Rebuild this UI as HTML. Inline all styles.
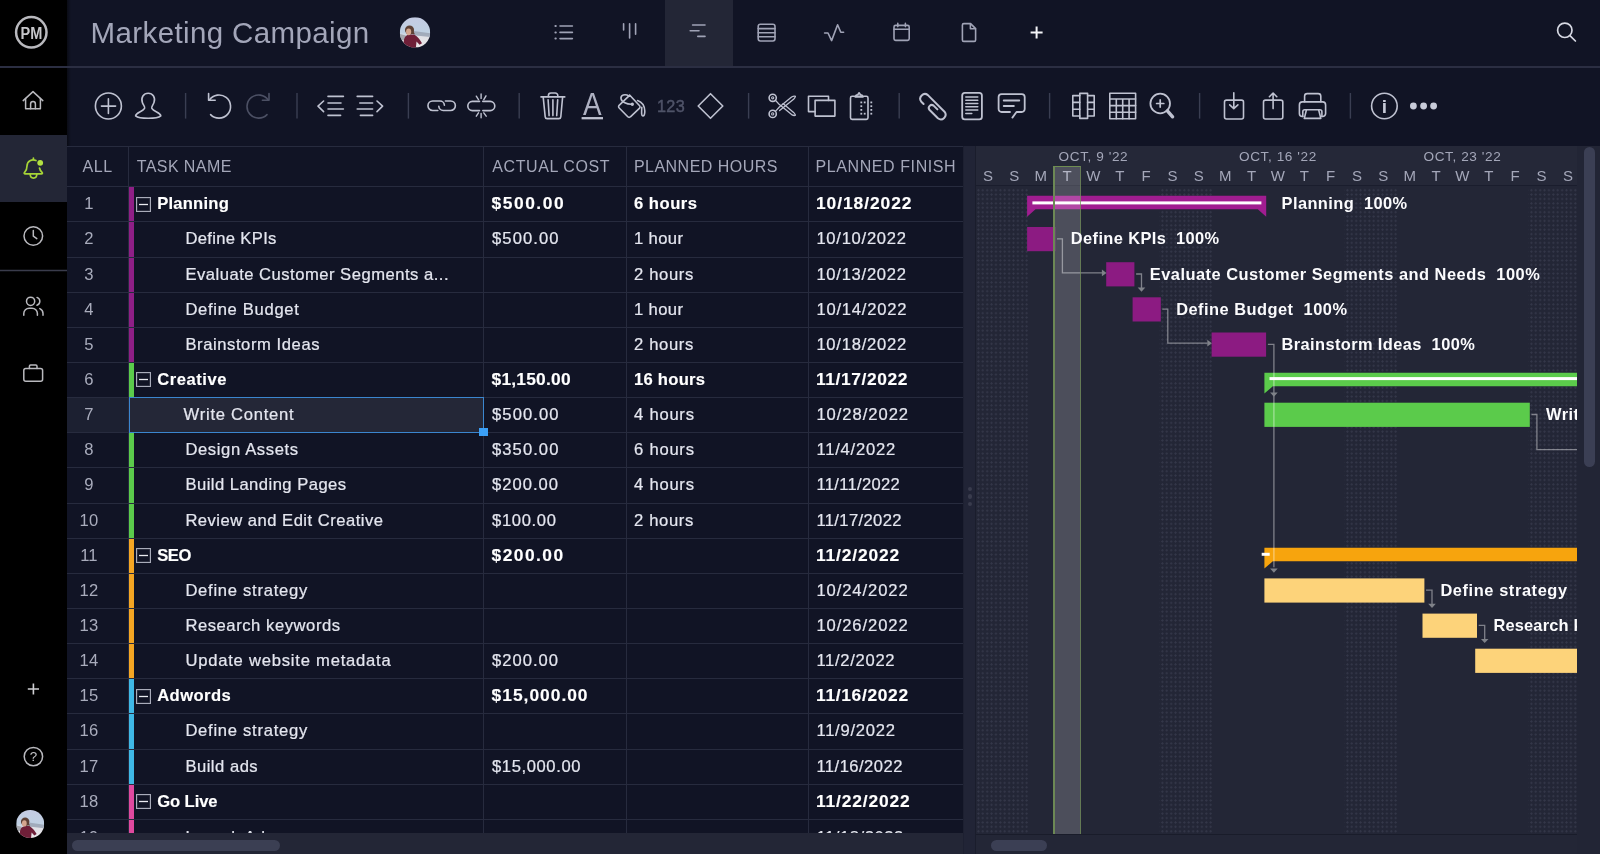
<!DOCTYPE html>
<html lang="en"><head><meta charset="utf-8"><title>Marketing Campaign</title>
<style>
*{box-sizing:border-box;margin:0;padding:0}
html,body{width:1600px;height:854px;overflow:hidden;background:#111425}
body{font-family:"Liberation Sans",Arial,sans-serif;color:#e6e8f0;-webkit-font-smoothing:antialiased}
#app{position:relative;width:1600px;height:854px;overflow:hidden;background:#111425;will-change:transform}
.abs{position:absolute}
svg{position:absolute;left:0;top:0;overflow:visible}
#sidebar{position:absolute;left:0;top:0;width:67px;height:854px;background:#000}
#sideshadow{position:absolute;left:67px;top:0;width:4px;height:854px;background:linear-gradient(90deg,rgba(0,0,0,.45),rgba(0,0,0,0))}
#sideactive{position:absolute;left:0;top:134.6px;width:67px;height:67.2px;background:#232636}
#hline{position:absolute;left:0;top:66px;width:1600px;height:2px;background:#2b2e42}
#title{position:absolute;left:90.6px;top:14px;font-size:29.5px;line-height:37.4px;color:#a3a6b9;letter-spacing:.38px;white-space:nowrap}
#tabactive{position:absolute;left:665.2px;top:0;width:67.4px;height:66px;background:#232636}
.ic{fill:none;stroke:#bfc2d1;stroke-width:1.6;stroke-linecap:round;stroke-linejoin:round}
.nav{fill:none;stroke:#a0a3b6;stroke-width:1.6;stroke-linecap:round;stroke-linejoin:round}
.side{fill:none;stroke:#b9b9be;stroke-width:1.5;stroke-linecap:round;stroke-linejoin:round}
.sep{stroke:#3a3e52;stroke-width:1.4;fill:none}
.dim{stroke:#4c5064}
/* grid */
#grid{position:absolute;left:67px;top:146px;width:895.5px;height:687.6px;overflow:hidden;background:#111425}
.hl{position:absolute;left:0;width:895.5px;height:1px;background:#272b3e}
.vl{position:absolute;top:0;width:1px;height:690px;background:#272b3e}
.th{position:absolute;top:0.7px;height:40px;line-height:40px;font-size:16px;color:#a4a7b9;white-space:nowrap}
.c{position:absolute;height:35px;line-height:34px;font-size:16.6px;color:#e4e6ef;white-space:nowrap}
.num{width:44px;text-align:center;left:0;color:#a9acbc;font-size:16.6px;letter-spacing:.2px}
.c{-webkit-text-stroke:.22px #e4e6ef}
.num{-webkit-text-stroke:0}
.b{font-weight:700;color:#fff;-webkit-text-stroke:.15px #fff}
.bar{position:absolute;left:61.2px;width:6.2px;height:35.6px}
.box{position:absolute;left:69px;width:15px;height:15px;border:1px solid #a9acba;box-shadow:inset 0 0 0 .5px rgba(169,172,186,.35)}
.box:after{content:"";position:absolute;left:2px;right:2px;top:6px;height:1px;background:#e9eaf0;box-shadow:0 .5px 0 rgba(233,234,240,.3),0 -.5px 0 rgba(233,234,240,.3)}
#sel{position:absolute;left:61.8px;width:355.4px;height:36.2px;background:#242737;border:1.5px solid #3b86cf}
#selnum{position:absolute;left:0;width:61.5px;height:35.2px;background:#1c2031}
#selh{position:absolute;left:412.2px;width:8.8px;height:8.4px;background:#3b9ff5}
#gscroll{position:absolute;left:67px;top:833px;width:895.5px;height:21px;background:#232636}
#gthumb{position:absolute;left:4.6px;top:6.6px;width:208px;height:11px;border-radius:6px;background:#3b3f53}
#split{position:absolute;left:962.5px;top:146px;width:13px;height:708px;background:#212436;border-right:1.2px solid #1a1d2c;border-left:1px solid #1d2031}
.sd{position:absolute;left:4px;width:4.6px;height:4.6px;border-radius:2.3px;background:#393c4d}
/* gantt */
#gantt{position:absolute;left:975.5px;top:146px;width:601px;height:687.6px;overflow:hidden;background:#232636}
#ghead{position:absolute;left:0;top:0;width:601px;height:40.4px;background:#252838;border-bottom:1.3px solid #1a1d2d}
.wk{position:absolute;top:3.4px;font-size:13.6px;line-height:16px;color:#a4a7b9;white-space:nowrap;letter-spacing:.58px;text-align:center;width:184.5px}
.dl{position:absolute;top:20.5px;width:26.36px;text-align:center;font-size:15px;line-height:18px;color:#a4a7b9}
.we{position:absolute;top:41.5px;height:646px;background-image:radial-gradient(circle,#343749 0.8px,rgba(52,55,73,0) 1.3px);background-size:4.393px 4.4px;background-position:1.2px 0}
#today{position:absolute;left:77.4px;top:20px;width:28px;height:670px;background:rgba(255,255,255,.19);border:1.3px solid #6f8d52;border-left:2.2px solid #6c8855;border-right:1.2px solid rgba(111,141,82,.7);border-bottom:0}
.t{position:absolute;height:23.8px}
.lb{position:absolute;font-size:16.4px;font-weight:700;color:#fbfbfd;white-space:pre;line-height:20px}
#vtrack{position:absolute;left:1576.5px;top:146px;width:23.5px;height:708px;background:#222535}
#vthumb{position:absolute;left:7.6px;top:0.6px;width:10.5px;height:320px;border-radius:5.5px;background:#3b3f54}
#hscroll{position:absolute;left:975.5px;top:833.6px;width:601px;height:21px;background:#232636;border-top:1.3px solid #191c2a}
#hthumb{position:absolute;left:15px;top:5.6px;width:56px;height:11px;border-radius:6px;background:#3b3f54}
</style></head>
<body>
<div id="app">

<div id="sidebar"></div><div id="sideshadow"></div><div id="sideactive"></div>
<div id="hline"></div>
<svg width="1600" height="854" viewBox="0 0 1600 854">
<!-- logo -->
<circle cx="31.3" cy="32.3" r="15.2" fill="none" stroke="#b9b9be" stroke-width="2.5"/>
<text x="20.6" y="38.7" textLength="21.8" lengthAdjust="spacingAndGlyphs" font-family="Liberation Sans, Arial, sans-serif" font-weight="700" font-size="17.2" fill="#c6c6ca">PM</text>
<!-- home -->
<g class="side">
<path d="M23.2 100.6 L33 91.6 L42.8 100.6"/>
<path d="M25.6 98.6 V108.8 H40.4 V98.6"/>
<path d="M30.6 108.8 V104 a2.4 2.4 0 0 1 4.8 0 V108.8"/>
</g>
<!-- bell -->
<g fill="none" stroke="#a6d437" stroke-width="1.7" stroke-linecap="round" stroke-linejoin="round">
<path d="M36 160.5 C32 158.6 27 161 27 166 C27 169.6 26 171 24.600 172.400 C23.800 173.200 24.200 173.900 25.200 173.900 H41.400 C42.400 173.900 42.800 173.200 42 172.400 C40.800 171.200 39.800 170 39.500 168"/>
<path d="M30.200 174 C30.200 179.400 36.800 179.400 36.800 174"/>
<path d="M33.400 158 V159.400"/>
</g>
<circle cx="40.2" cy="162.8" r="2.9" fill="#b2e042"/>
<!-- clock -->
<g class="side"><circle cx="33.3" cy="236" r="9.3"/><path d="M33.3 230.4 V236.2 L36.8 238.6"/></g>
<line x1="0" y1="270.5" x2="67" y2="270.5" stroke="#3a3c4c" stroke-width="1.4"/>
<!-- users -->
<g class="side">
<circle cx="30.6" cy="301.3" r="4.1"/>
<path d="M23.8 315.2 V313.6 A5.4 5.4 0 0 1 29.2 308.2 H32 A5.4 5.4 0 0 1 37.4 313.6 V315.2"/>
<path d="M37 297.4 A4.1 4.1 0 0 1 37 305.2"/>
<path d="M39.8 308.6 A5.4 5.4 0 0 1 43 313.6 V315.2"/>
</g>
<!-- briefcase -->
<g class="side">
<rect x="23.8" y="368.6" width="18.8" height="12.6" rx="2"/>
<path d="M29.4 368.6 V366.2 a1.2 1.2 0 0 1 1.2 -1.2 H35.8 a1.2 1.2 0 0 1 1.2 1.2 V368.6"/>
</g>
<!-- plus -->
<path d="M27.8 689 H39 M33.4 683.4 V694.6" stroke="#cfcfd3" stroke-width="1.6" fill="none"/>
<!-- help -->
<circle cx="33.4" cy="756.6" r="9.2" fill="none" stroke="#b9b9be" stroke-width="1.5"/>
<text x="33.4" y="761.4" text-anchor="middle" font-family="Liberation Sans, Arial, sans-serif" font-size="13.4" fill="#c4c4c9">?</text>
<g>
<clipPath id="av1"><circle cx="30.2" cy="824" r="14"/></clipPath>
<linearGradient id="av1g" x1="0" y1="0" x2="0" y2="1"><stop offset="0" stop-color="#c4cbe3"/><stop offset=".5" stop-color="#bfd0e2"/><stop offset=".62" stop-color="#dfe0e6"/><stop offset="1" stop-color="#ece6e8"/></linearGradient>
<g clip-path="url(#av1)">
<rect x="16.20" y="810.00" width="28" height="28" fill="url(#av1g)"/>
<path d="M28.80 822.60 L44.20 824.70 V828.20 L28.80 826.52 Z" fill="#9aa3b4" opacity=".85"/>
<path d="M16.20 825.40 L21.80 826.80 V831.00 H16.20 Z" fill="#8b8f96" opacity=".7"/>
<path d="M20.12 838.00 C19.00 831.00 20.40 827.08 24.60 825.96 L29.50 825.96 C33.00 828.20 35.52 831.70 36.64 834.08 L34.40 835.48 L31.60 832.40 L30.90 839.40 Z" fill="#6f1f38"/>
<ellipse cx="25.16" cy="821.76" rx="4.20" ry="4.20" fill="#5e4136"/>
<path d="M27.40 819.80 L29.92 825.40 L26.00 825.40 Z" fill="#5e4136"/>
<ellipse cx="24.32" cy="823.44" rx="2.38" ry="3.08" fill="#d4a68f"/>
</g></g>
</svg>


<div id="tabactive"></div>
<div id="title">Marketing Campaign</div>
<svg width="1600" height="70" viewBox="0 0 1600 70">
<g>
<clipPath id="av2"><circle cx="415" cy="32.4" r="15.2"/></clipPath>
<linearGradient id="av2g" x1="0" y1="0" x2="0" y2="1"><stop offset="0" stop-color="#c4cbe3"/><stop offset=".5" stop-color="#bfd0e2"/><stop offset=".62" stop-color="#dfe0e6"/><stop offset="1" stop-color="#ece6e8"/></linearGradient>
<g clip-path="url(#av2)">
<rect x="399.80" y="17.20" width="30.4" height="30.4" fill="url(#av2g)"/>
<path d="M413.48 30.88 L430.20 33.16 V36.96 L413.48 35.14 Z" fill="#9aa3b4" opacity=".85"/>
<path d="M399.80 33.92 L405.88 35.44 V40.00 H399.80 Z" fill="#8b8f96" opacity=".7"/>
<path d="M404.06 47.60 C402.84 40.00 404.36 35.74 408.92 34.53 L414.24 34.53 C418.04 36.96 420.78 40.76 421.99 43.34 L419.56 44.86 L416.52 41.52 L415.76 49.12 Z" fill="#6f1f38"/>
<ellipse cx="409.53" cy="29.97" rx="4.56" ry="4.56" fill="#5e4136"/>
<path d="M411.96 27.84 L414.70 33.92 L410.44 33.92 Z" fill="#5e4136"/>
<ellipse cx="408.62" cy="31.79" rx="2.58" ry="3.34" fill="#d4a68f"/>
</g></g>
<g class="nav">
<!-- list -->
<path d="M560 26 H572.4 M560 32.4 H572.4 M560 38.6 H572.4"/>
<path d="M555.4 26 h.4 M555.4 32.4 h.4 M555.4 38.6 h.4" stroke-width="2"/>
<!-- board -->
<path d="M623.6 23.8 V30 M629.6 23.8 V38 M635.6 23.8 V34.2"/>
<!-- gantt -->
<path d="M692.6 25 H705 M690.2 30.7 H699 M697.8 36.4 H705"/>
<!-- sheet -->
<rect x="758.2" y="24.2" width="16.8" height="16.8" rx="2.2"/>
<path d="M758.2 28.6 H775 M758.2 32.7 H775 M758.2 36.8 H775"/>
<!-- activity -->
<path d="M824.6 33 H828 L831.6 40.6 L837.6 24.8 L840.8 32.2 H843.6"/>
<!-- calendar -->
<rect x="894" y="25.4" width="15.2" height="15" rx="1.6"/>
<path d="M894 29.3 H909.2 M897.8 23.4 V26.6 M905.4 23.4 V26.6"/>
<!-- file -->
<path d="M963.8 23.6 H970.6 L975.6 28.6 V40 a1.4 1.4 0 0 1 -1.4 1.4 H963.8 a1.4 1.4 0 0 1 -1.4 -1.4 V25 a1.4 1.4 0 0 1 1.4 -1.4 Z"/>
<path d="M970.4 23.8 V28.8 H975.4"/>
</g>
<path d="M1030.6 32.4 H1042.6 M1036.6 26.4 V38.4" stroke="#f4f4f8" stroke-width="2" fill="none"/>
<g fill="none" stroke="#d7d9e4" stroke-width="1.7" stroke-linecap="round"><circle cx="1564.8" cy="30.3" r="7.2"/><path d="M1570.2 35.8 L1575.4 41"/></g>
</svg>


<svg width="1600" height="146" viewBox="0 0 1600 146">
<line class="sep" x1="185.6" y1="93" x2="185.6" y2="118.6"/><line class="sep" x1="297" y1="93" x2="297" y2="118.6"/><line class="sep" x1="408.4" y1="93" x2="408.4" y2="118.6"/><line class="sep" x1="519.2" y1="93" x2="519.2" y2="118.6"/><line class="sep" x1="748.6" y1="93" x2="748.6" y2="118.6"/><line class="sep" x1="899.2" y1="93" x2="899.2" y2="118.6"/><line class="sep" x1="1049.6" y1="93" x2="1049.6" y2="118.6"/><line class="sep" x1="1199.6" y1="93" x2="1199.6" y2="118.6"/><line class="sep" x1="1350.4" y1="93" x2="1350.4" y2="118.6"/>
<g class="ic">
<!-- add -->
<circle cx="108.4" cy="106" r="13"/><path d="M101.400 106.100 H115.600 M108.400 98.800 V113.400"/>
<!-- user -->
<path d="M135.600 115.800 C136 112.500 142.500 112 144.600 108.400 C145.400 107 143.500 105.500 142.400 102.600 C140.600 97.600 143.600 93.200 148.200 93.200 C152.800 93.200 155.800 97.600 154 102.600 C152.900 105.500 151 107 151.800 108.400 C153.900 112 160.400 112.500 160.800 115.800 C157 119 139.400 119 135.600 115.800 Z"/>
<!-- undo -->
<path d="M208.6 93.6 V100.2 H215.2"/><path d="M209.4 100 A11.6 11.6 0 1 1 210.6 114.6"/>
<!-- redo -->
<g class="dim"><path d="M269 93.6 V100.2 H262.4"/><path d="M268.2 100 A11.6 11.6 0 1 0 267 114.6"/></g>
<!-- outdent -->
<path d="M323.6 101 L318 106.2 L323.6 111.6"/>
<path d="M328 96.4 H343.4 M328 103 H341 M328 109 H343.4 M328 115.4 H340.6"/>
<!-- indent -->
<path d="M377 101 L382.6 106.2 L377 111.6"/>
<path d="M357.2 96.4 H372.6 M359.8 103 H372.6 M357.2 109 H372.6 M360.4 115.4 H372.6"/>
<!-- link -->
<path d="M437.8 110.5 H432.7 a4.75 4.75 0 0 1 0 -9.5 H440 a4.4 4.4 0 0 1 4.4 4.2"/>
<path d="M445.4 101 H450.6 a4.75 4.75 0 0 1 0 9.5 H443.2 a4.4 4.4 0 0 1 -4.4 -4.2"/>
<!-- unlink -->
<path d="M479.5 101.4 H472.4 a4.6 4.6 0 0 0 0 9.2 H479.5"/>
<path d="M482.8 101.4 H490.2 a4.6 4.6 0 0 1 0 9.2 H482.8"/>
<path d="M481.1 94 V98.4 M476.3 96.2 L478.5 99.6 M486 95.8 L483.8 99.6 M481.1 113.4 V117.8 M478.5 112.8 L476.3 116.2 M483.8 112.8 L486.2 116.2" stroke-width="1.4"/>
<!-- trash -->
<path d="M541 96.9 H564.8"/>
<path d="M548.4 96.8 V95.6 a2.6 2.6 0 0 1 2.6 -2.6 H555.2 a2.6 2.6 0 0 1 2.6 2.6 V96.8"/>
<path d="M543.2 97.2 L545.2 116.8 a2 2 0 0 0 2 1.8 H558.8 a2 2 0 0 0 2 -1.8 L562.6 97.2"/>
<path d="M548.1 99.8 L549.1 115.6 M552.9 99.8 V115.6 M557.7 99.8 L556.7 115.6"/>
<!-- font A -->
<path d="M581.6 118.2 H603" stroke-width="2.3" stroke-linecap="butt"/>
<!-- bucket -->
<path d="M629.8 95.2 L639.6 105.8 a1.8 1.8 0 0 1 0 2.4 L630.4 116.8 a1.8 1.8 0 0 1 -2.6 0 L619.2 108 a1.8 1.8 0 0 1 -.1 -2.6 L629.8 95.2"/>
<path d="M629 96 C625 93.4 620.4 95 621 98.6 C621.6 102 627 104.5 632 104.2"/>
<circle cx="632.3" cy="104.2" r=".9"/>
<path d="M637.6 100.6 C641.6 102 644.6 106 644.8 111 C644.9 114.6 644 116 642.8 116 C641.2 116 641.6 112 641.8 107.4"/>
<!-- diamond -->
<path d="M710.5 93.7 L722.8 106 L710.5 118.3 L698.2 106 Z"/>
<!-- scissors -->
<circle cx="772.7" cy="97.8" r="3.6"/><circle cx="772.7" cy="113.9" r="3.6"/>
<circle cx="772.7" cy="97.8" r="1.1" stroke-width="1.1"/><circle cx="772.7" cy="113.9" r="1.1" stroke-width="1.1"/>
<path d="M775.4 100.2 L779.4 104.6 L791.6 114.6 C793.4 115.6 794.8 115.6 795.4 115.2 C795.2 114.2 794.6 113.4 793.6 112.4 L783 103.6" stroke-width="1.3"/>
<path d="M775.4 111.4 L779.4 107 L791.6 97 C793.4 96 794.8 96 795.4 96.400 C795.2 97.400 794.600 98.200 793.600 99.200 L779.6 110.6" stroke-width="1.3"/>
<!-- copy -->
<path d="M815.1 111.6 H808.5 V96.3 H828.5 V100.4"/>
<rect x="815.1" y="100.4" width="19.8" height="15.700"/>
<!-- paste -->
<rect x="850.5" y="96.300" width="17.500" height="23.100" rx="1.600"/>
<path d="M855.2 97 L856.400 95 H857.600 L859.100 92.800 L860.600 95 H861.800 L863 97 Z"/>
<rect x="860.4" y="101.5" width="1.8" height="1.8" fill="#bfc2d1" stroke="none"/><rect x="860.4" y="105.3" width="1.8" height="1.8" fill="#bfc2d1" stroke="none"/><rect x="860.4" y="109.0" width="1.8" height="1.8" fill="#bfc2d1" stroke="none"/><rect x="860.4" y="112.8" width="1.8" height="1.8" fill="#bfc2d1" stroke="none"/><rect x="863.8" y="101.5" width="1.8" height="1.8" fill="#bfc2d1" stroke="none"/><rect x="863.8" y="112.8" width="1.8" height="1.8" fill="#bfc2d1" stroke="none"/><rect x="870.4" y="101.5" width="1.8" height="1.8" fill="#bfc2d1" stroke="none"/><rect x="870.4" y="105.3" width="1.8" height="1.8" fill="#bfc2d1" stroke="none"/><rect x="870.4" y="109.0" width="1.8" height="1.8" fill="#bfc2d1" stroke="none"/><rect x="870.4" y="112.8" width="1.8" height="1.8" fill="#bfc2d1" stroke="none"/>
<!-- paperclip -->
<path d="M923.600 104 L921.300 101.700 A4.700 4.700 0 0 1 927.900 95.100 L944.500 111.700 A4.700 4.700 0 0 1 937.900 118.300 L929.400 109.800 A3 3 0 0 1 933.600 105.600 L937.400 109.400" stroke-width="2"/>
<!-- doc -->
<rect x="962.200" y="92.800" width="19.700" height="26.500" rx="2.600" stroke-width="1.800"/>
<path d="M965.800 96.900 H977.800 M965.800 100.200 H977.800 M965.800 103.500 H977.800 M965.800 106.800 H977.800 M965.800 110.100 H977.800 M965.800 113.400 H971.800" stroke-width="1.500"/>
<!-- comment -->
<path d="M1010 112 H1001.600 a3 3 0 0 1 -3 -3 V97.100 a3 3 0 0 1 3 -3 H1021.700 a3 3 0 0 1 3 3 V109 a3 3 0 0 1 -3 3 H1016.500 L1012.400 117.600" stroke-width="1.800"/>
<path d="M1003.800 100.400 H1019.200 M1003.800 106 H1013.800" stroke-width="2"/>
<!-- columns -->
<rect x="1079.800" y="93.400" width="7.800" height="25"/>
<path d="M1079.800 95.600 H1072.800 V116 H1079.800 M1072.800 102.400 H1079.800 M1072.800 109.200 H1079.800"/>
<path d="M1087.600 95.600 H1094.200 V116 H1087.600 M1087.600 102.400 H1094.200 M1087.600 109.200 H1094.200"/>
<!-- grid -->
<rect x="1109.800" y="93.200" width="25.800" height="25.600"/>
<path d="M1109.800 99 H1135.600 M1109.800 105.600 H1135.600 M1109.800 112.200 H1135.600 M1116.300 99 V118.800 M1122.700 99 V118.800 M1129.100 99 V118.800"/>
<!-- zoom -->
<circle cx="1160.200" cy="103.500" r="9.800" stroke-width="1.800"/>
<path d="M1156.600 103.500 H1163.800 M1160.200 99.900 V107.100" stroke-width="1.700"/>
<path d="M1167.400 110.800 L1172.600 116.800" stroke-width="3.400"/>
<!-- download -->
<rect x="1224.5" y="100.1" width="19" height="18.900" rx="2"/>
<path d="M1233.800 92.800 V108.200 M1229.700 104.800 L1233.800 108.600 L1237.900 104.800"/>
<!-- upload -->
<rect x="1263.500" y="100.100" width="19.300" height="18.900" rx="2"/>
<path d="M1273.100 108.600 V93.200 M1269.400 96.700 L1273.100 93 L1276.800 96.700"/>
<!-- printer -->
<path d="M1304.600 101.800 V96.200 a2.600 2.600 0 0 1 2.600 -2.600 H1318.200 a2.600 2.600 0 0 1 2.600 2.600 V101.800"/>
<path d="M1302.800 116.500 H1302.400 a3 3 0 0 1 -3 -3 V104.900 a3 3 0 0 1 3 -3 H1322.600 a3 3 0 0 1 3 3 V113.500 a3 3 0 0 1 -3 3 H1321.900"/>
<path d="M1302.800 116.500 V111.800 a2 2 0 0 1 2 -2 H1319.900 a2 2 0 0 1 2 2 V116.500"/>
<path d="M1306.400 110 L1304.300 118.400 H1320.800 L1318.700 110"/>
<!-- info -->
<circle cx="1384.4" cy="106" r="12.8"/>

</g>
<text x="1384.4" y="112.8" text-anchor="middle" font-family="Liberation Sans, Arial, sans-serif" font-weight="700" font-size="19" fill="#c6c9d7">i</text>
<circle cx="1413.400" cy="106" r="3.400" fill="#c8cbd9"/><circle cx="1423.600" cy="106" r="3.400" fill="#c8cbd9"/><circle cx="1433.600" cy="106" r="3.400" fill="#c8cbd9"/>
<text x="583" y="115" textLength="18.6" lengthAdjust="spacingAndGlyphs" font-family="Liberation Sans, Arial, sans-serif" font-size="30.6" fill="#aeb1c2">A</text>
<text x="657" y="111.800" font-family="Liberation Sans, Arial, sans-serif" font-size="16.2" fill="#4f5368" stroke="#4f5368" stroke-width=".45" letter-spacing="0.35">123</text>
</svg>

<div id="grid"><div class="th" style="left:15.6px;letter-spacing:0.5px">ALL</div>
<div class="th" style="left:69.7px;letter-spacing:0.42px">TASK NAME</div>
<div class="th" style="left:425.3px;letter-spacing:0.58px">ACTUAL COST</div>
<div class="th" style="left:566.9px;letter-spacing:0.48px">PLANNED HOURS</div>
<div class="th" style="left:748.6px;letter-spacing:0.58px">PLANNED FINISH</div>
<div id="selnum" style="top:251.64px"></div>
<div class="bar" style="top:40.60px;background:#8f1f86"></div>
<div class="bar" style="top:75.74px;background:#8f1f86"></div>
<div class="bar" style="top:110.88px;background:#8f1f86"></div>
<div class="bar" style="top:146.02px;background:#8f1f86"></div>
<div class="bar" style="top:181.16px;background:#8f1f86"></div>
<div class="bar" style="top:216.30px;background:#5bcb4b"></div>
<div class="bar" style="top:286.58px;background:#5bcb4b"></div>
<div class="bar" style="top:321.72px;background:#5bcb4b"></div>
<div class="bar" style="top:356.86px;background:#5bcb4b"></div>
<div class="bar" style="top:392.00px;background:#f5a623"></div>
<div class="bar" style="top:427.14px;background:#f5a623"></div>
<div class="bar" style="top:462.28px;background:#f5a623"></div>
<div class="bar" style="top:497.42px;background:#f5a623"></div>
<div class="bar" style="top:532.56px;background:#3fb8e6"></div>
<div class="bar" style="top:567.70px;background:#3fb8e6"></div>
<div class="bar" style="top:602.84px;background:#3fb8e6"></div>
<div class="bar" style="top:637.98px;background:#e0499f"></div>
<div class="bar" style="top:673.12px;background:#e0499f"></div>
<div class="hl" style="top:0px"></div>
<div class="hl" style="top:40px"></div>
<div class="hl" style="top:75px"></div>
<div class="hl" style="top:111px"></div>
<div class="hl" style="top:146px"></div>
<div class="hl" style="top:181px"></div>
<div class="hl" style="top:216px"></div>
<div class="hl" style="top:251px"></div>
<div class="hl" style="top:286px"></div>
<div class="hl" style="top:321px"></div>
<div class="hl" style="top:357px"></div>
<div class="hl" style="top:392px"></div>
<div class="hl" style="top:427px"></div>
<div class="hl" style="top:462px"></div>
<div class="hl" style="top:497px"></div>
<div class="hl" style="top:532px"></div>
<div class="hl" style="top:567px"></div>
<div class="hl" style="top:603px"></div>
<div class="hl" style="top:638px"></div>
<div class="hl" style="top:673px"></div>
<div class="hl" style="top:708px"></div>
<div class="vl" style="left:61px"></div>
<div class="vl" style="left:416px"></div>
<div class="vl" style="left:559px"></div>
<div class="vl" style="left:741px"></div>
<div id="sel" style="top:251.14px"></div>
<div id="selh" style="top:282.04px"></div>
<div class="c num" style="top:41px">1</div>
<div class="box" style="top:51px"></div>
<div class="c b" style="top:41px;left:90.2px;letter-spacing:0.22px">Planning</div>
<div class="c b" style="top:40px;left:424.6px;font-size:17.4px;letter-spacing:1.52px">$500.00</div>
<div class="c b" style="top:41px;left:567px;letter-spacing:0.51px">6 hours</div>
<div class="c b" style="top:40px;left:749px;font-size:17.4px;letter-spacing:0.94px">10/18/2022</div>
<div class="c num" style="top:76px">2</div>
<div class="c" style="top:76px;left:118.4px;letter-spacing:0.34px">Define KPIs</div>
<div class="c" style="top:76px;left:425px;letter-spacing:1.09px">$500.00</div>
<div class="c" style="top:76px;left:567px;letter-spacing:0.39px">1 hour</div>
<div class="c" style="top:76px;left:749.4px;letter-spacing:0.73px">10/10/2022</div>
<div class="c num" style="top:112px">3</div>
<div class="c" style="top:112px;left:118.4px;letter-spacing:0.5px">Evaluate Customer Segments a...</div>
<div class="c" style="top:112px;left:567px;letter-spacing:0.67px">2 hours</div>
<div class="c" style="top:112px;left:749.4px;letter-spacing:0.73px">10/13/2022</div>
<div class="c num" style="top:147px">4</div>
<div class="c" style="top:147px;left:118.4px;letter-spacing:0.69px">Define Budget</div>
<div class="c" style="top:147px;left:567px;letter-spacing:0.39px">1 hour</div>
<div class="c" style="top:147px;left:749.4px;letter-spacing:0.79px">10/14/2022</div>
<div class="c num" style="top:182px">5</div>
<div class="c" style="top:182px;left:118.4px;letter-spacing:0.58px">Brainstorm Ideas</div>
<div class="c" style="top:182px;left:567px;letter-spacing:0.67px">2 hours</div>
<div class="c" style="top:182px;left:749.4px;letter-spacing:0.75px">10/18/2022</div>
<div class="c num" style="top:217px">6</div>
<div class="box" style="top:226px"></div>
<div class="c b" style="top:217px;left:90.2px;letter-spacing:0.53px">Creative</div>
<div class="c b" style="top:216px;left:424.6px;font-size:17.4px;letter-spacing:0.2px">$1,150.00</div>
<div class="c b" style="top:217px;left:567px;letter-spacing:0.26px">16 hours</div>
<div class="c b" style="top:216px;left:749px;font-size:17.4px;letter-spacing:0.6px">11/17/2022</div>
<div class="c num" style="top:252px">7</div>
<div class="c" style="top:252px;left:116.6px;letter-spacing:0.74px">Write Content</div>
<div class="c" style="top:252px;left:425px;letter-spacing:1.09px">$500.00</div>
<div class="c" style="top:252px;left:567px;letter-spacing:0.77px">4 hours</div>
<div class="c" style="top:252px;left:749.4px;letter-spacing:0.96px">10/28/2022</div>
<div class="c num" style="top:287px">8</div>
<div class="c" style="top:287px;left:118.4px;letter-spacing:0.63px">Design Assets</div>
<div class="c" style="top:287px;left:425px;letter-spacing:1.07px">$350.00</div>
<div class="c" style="top:287px;left:567px;letter-spacing:0.77px">6 hours</div>
<div class="c" style="top:287px;left:749.4px;letter-spacing:0.78px">11/4/2022</div>
<div class="c num" style="top:322px">9</div>
<div class="c" style="top:322px;left:118.4px;letter-spacing:0.47px">Build Landing Pages</div>
<div class="c" style="top:322px;left:425px;letter-spacing:1.02px">$200.00</div>
<div class="c" style="top:322px;left:567px;letter-spacing:0.77px">4 hours</div>
<div class="c" style="top:322px;left:749.4px;letter-spacing:0.31px">11/11/2022</div>
<div class="c num" style="top:358px">10</div>
<div class="c" style="top:358px;left:118.4px;letter-spacing:0.49px">Review and Edit Creative</div>
<div class="c" style="top:358px;left:425px;letter-spacing:0.65px">$100.00</div>
<div class="c" style="top:358px;left:567px;letter-spacing:0.67px">2 hours</div>
<div class="c" style="top:358px;left:749.4px;letter-spacing:0.37px">11/17/2022</div>
<div class="c num" style="top:393px">11</div>
<div class="box" style="top:402px"></div>
<div class="c b" style="top:393px;left:90.2px;letter-spacing:-0.42px">SEO</div>
<div class="c b" style="top:392px;left:424.6px;font-size:17.4px;letter-spacing:1.44px">$200.00</div>
<div class="c b" style="top:392px;left:749px;font-size:17.4px;letter-spacing:0.84px">11/2/2022</div>
<div class="c num" style="top:428px">12</div>
<div class="c" style="top:428px;left:118.4px;letter-spacing:0.73px">Define strategy</div>
<div class="c" style="top:428px;left:749.4px;letter-spacing:0.92px">10/24/2022</div>
<div class="c num" style="top:463px">13</div>
<div class="c" style="top:463px;left:118.4px;letter-spacing:0.56px">Research keywords</div>
<div class="c" style="top:463px;left:749.4px;letter-spacing:0.92px">10/26/2022</div>
<div class="c num" style="top:498px">14</div>
<div class="c" style="top:498px;left:118.4px;letter-spacing:0.78px">Update website metadata</div>
<div class="c" style="top:498px;left:425px;letter-spacing:1.02px">$200.00</div>
<div class="c" style="top:498px;left:749.4px;letter-spacing:0.7px">11/2/2022</div>
<div class="c num" style="top:533px">15</div>
<div class="box" style="top:543px"></div>
<div class="c b" style="top:533px;left:90.2px;letter-spacing:0.43px">Adwords</div>
<div class="c b" style="top:532px;left:424.6px;font-size:17.4px;letter-spacing:0.99px">$15,000.00</div>
<div class="c b" style="top:532px;left:749px;font-size:17.4px;letter-spacing:0.67px">11/16/2022</div>
<div class="c num" style="top:568px">16</div>
<div class="c" style="top:568px;left:118.4px;letter-spacing:0.73px">Define strategy</div>
<div class="c" style="top:568px;left:749.4px;letter-spacing:0.75px">11/9/2022</div>
<div class="c num" style="top:604px">17</div>
<div class="c" style="top:604px;left:118.4px;letter-spacing:0.5px">Build ads</div>
<div class="c" style="top:604px;left:425px;letter-spacing:0.6px">$15,000.00</div>
<div class="c" style="top:604px;left:749.4px;letter-spacing:0.47px">11/16/2022</div>
<div class="c num" style="top:639px">18</div>
<div class="box" style="top:648px"></div>
<div class="c b" style="top:639px;left:90.2px;letter-spacing:-0.08px">Go Live</div>
<div class="c b" style="top:638px;left:749px;font-size:17.4px;letter-spacing:0.84px">11/22/2022</div>
<div class="c num" style="top:675px">19</div>
<div class="c" style="top:675px;left:118.4px;letter-spacing:0.14px">Launch Ads</div>
<div class="c" style="top:675px;left:749.4px;letter-spacing:0.57px">11/18/2022</div></div>
<div id="gscroll"><div id="gthumb"></div></div>
<div id="split"><div class="sd" style="top:340.6px"></div><div class="sd" style="top:348.2px"></div><div class="sd" style="top:355.6px"></div></div>
<div id="gantt"><div class="we" style="left:-0.70px;width:52.72px"></div>
<div class="we" style="left:183.82px;width:52.72px"></div>
<div class="we" style="left:368.34px;width:52.72px"></div>
<div class="we" style="left:552.86px;width:52.72px"></div>
<div id="ghead"><div class="wk" style="left:25.66px">OCT, 9 '22</div><div class="wk" style="left:210.18px">OCT, 16 '22</div><div class="wk" style="left:394.70px">OCT, 23 '22</div><div class="dl" style="left:-0.70px">S</div><div class="dl" style="left:25.66px">S</div><div class="dl" style="left:52.02px">M</div><div class="dl" style="left:78.38px">T</div><div class="dl" style="left:104.74px">W</div><div class="dl" style="left:131.10px">T</div><div class="dl" style="left:157.46px">F</div><div class="dl" style="left:183.82px">S</div><div class="dl" style="left:210.18px">S</div><div class="dl" style="left:236.54px">M</div><div class="dl" style="left:262.90px">T</div><div class="dl" style="left:289.26px">W</div><div class="dl" style="left:315.62px">T</div><div class="dl" style="left:341.98px">F</div><div class="dl" style="left:368.34px">S</div><div class="dl" style="left:394.70px">S</div><div class="dl" style="left:421.06px">M</div><div class="dl" style="left:447.42px">T</div><div class="dl" style="left:473.78px">W</div><div class="dl" style="left:500.14px">T</div><div class="dl" style="left:526.50px">F</div><div class="dl" style="left:552.86px">S</div><div class="dl" style="left:579.22px">S</div></div>
<svg width="601" height="688" viewBox="0 0 601 688"><path d="M51.1 49.8 H290.2 V70.7 L281.8 63.3 H59.5 L51.1 70.7 Z" fill="#a01d90"/><rect x="56.4" y="55.4" width="229.0" height="3" fill="#fff"/><rect x="51.1" y="81.0" width="28.2" height="24.2" fill="#8c1b82"/><rect x="130.2" y="116.2" width="28.2" height="24.2" fill="#8c1b82"/><rect x="156.6" y="151.3" width="28.2" height="24.2" fill="#8c1b82"/><rect x="235.6" y="186.5" width="54.5" height="24.2" fill="#8c1b82"/><path d="M288.4 226.7 H640.9 V240.2 H296.8 L288.4 247.6 Z" fill="#5bcb4b"/><rect x="293.5" y="231.1" width="346.5" height="3" fill="#fff"/><rect x="288.4" y="256.7" width="265.4" height="24.2" fill="#5bcb4b"/><path d="M288.4 401.7 H640.9 V415.2 H296.8 L288.4 422.6 Z" fill="#f7a40d"/><rect x="285.7" y="406.8" width="8.0" height="3" fill="#fff"/><rect x="288.4" y="432.4" width="160.0" height="24.2" fill="#fdd37a"/><rect x="446.5" y="467.6" width="54.5" height="24.2" fill="#fdd37a"/><rect x="499.2" y="502.7" width="141.7" height="24.2" fill="#fdd37a"/><path d="M81.0 92.8 H86.4 V126.9 H126.1" fill="none" stroke="#fff" stroke-opacity=".42" stroke-width="1.3"/><path d="M125.9 123.5 V130.3 L130.5 126.9 Z" fill="#7f8289"/><path d="M160.1 128.0 H165.5 V142.2" fill="none" stroke="#fff" stroke-opacity=".42" stroke-width="1.3"/><path d="M161.7 141.5 H169.3 L165.5 145.7 Z" fill="#7f8289"/><path d="M186.4 163.1 H191.8 V197.2 H231.5" fill="none" stroke="#fff" stroke-opacity=".42" stroke-width="1.3"/><path d="M231.3 193.8 V200.6 L235.9 197.2 Z" fill="#7f8289"/><path d="M291.9 198.3 H297.9 V421.3" fill="none" stroke="#fff" stroke-opacity=".42" stroke-width="1.3"/><path d="M294.1 246.6 H301.7 L297.9 250.8 Z" fill="#7f8289"/><path d="M294.1 422.6 H301.7 L297.9 426.8 Z" fill="#7f8289"/><path d="M555.5 268.5 H560.9 V303.7 H601" fill="none" stroke="#fff" stroke-opacity=".42" stroke-width="1.3"/><path d="M450.0 444.2 H456.0 V458.5" fill="none" stroke="#fff" stroke-opacity=".42" stroke-width="1.3"/><path d="M452.2 457.8 H459.8 L456.0 462.0 Z" fill="#7f8289"/><path d="M502.7 479.4 H508.7 V493.6" fill="none" stroke="#fff" stroke-opacity=".42" stroke-width="1.3"/><path d="M504.9 492.9 H512.5 L508.7 497.1 Z" fill="#7f8289"/></svg>
<div id="today"></div>
<div class="lb" style="left:306.1px;top:47px;letter-spacing:0.41px">Planning  100%</div>
<div class="lb" style="left:95.3px;top:82px;letter-spacing:0.39px">Define KPIs  100%</div>
<div class="lb" style="left:174.3px;top:118px;letter-spacing:0.49px">Evaluate Customer Segments and Needs  100%</div>
<div class="lb" style="left:200.7px;top:153px;letter-spacing:0.48px">Define Budget  100%</div>
<div class="lb" style="left:306.1px;top:188px;letter-spacing:0.39px">Brainstorm Ideas  100%</div>
<div class="lb" style="left:570.5px;top:258px;letter-spacing:0.5px">Write Content</div>
<div class="lb" style="left:464.9px;top:434px;letter-spacing:0.59px">Define strategy</div>
<div class="lb" style="left:517.9px;top:469px;letter-spacing:0.2px">Research keywords</div></div>
<div id="hscroll"><div id="hthumb"></div></div>
<div id="vtrack"><div id="vthumb"></div></div>
</div>
</body></html>
